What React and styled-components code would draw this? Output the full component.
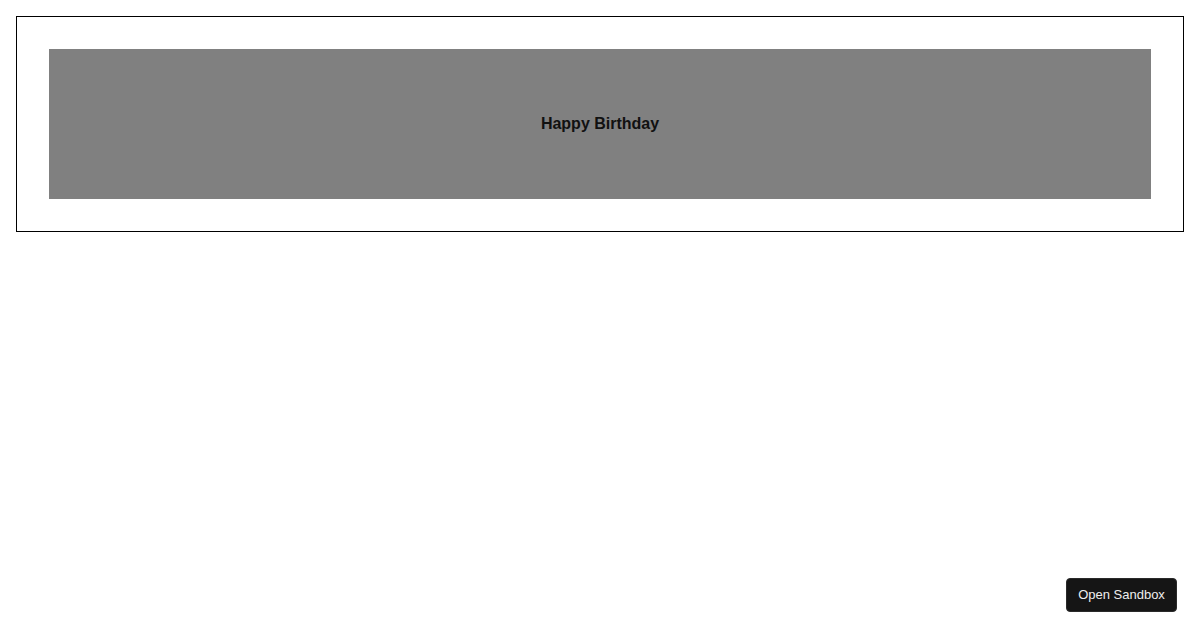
import React from "react";
import styled, { createGlobalStyle } from "styled-components";

const Global = createGlobalStyle`
  html, body { margin: 0; padding: 0; background: #fff; }
  body { padding: 16px; font-family: "Liberation Sans", Arial, sans-serif; }
`;

const Frame = styled.div`
  border: 1px solid #000;
  padding: 32px;
`;

const Banner = styled.div`
  height: 150px;
  background: #808080;
  display: flex;
  align-items: center;
  justify-content: center;
`;

const Title = styled.h1`
  margin: 0;
  font-family: "Liberation Sans", Arial, sans-serif;
  font-size: 16px;
  font-weight: 700;
  color: #111;
`;

const SandboxButton = styled.button`
  position: fixed;
  right: 23px;
  bottom: 18px;
  width: 111px;
  height: 34px;
  background: #151515;
  color: #eee;
  border: 1px solid #2a2a2a;
  border-radius: 4px;
  font-family: "Liberation Sans", Arial, sans-serif;
  font-size: 13px;
  padding: 0 0 2px;
  cursor: pointer;
`;

export default function App() {
  return (
    <>
      <Global />
      <Frame>
        <Banner>
          <Title>Happy Birthday</Title>
        </Banner>
      </Frame>
      <SandboxButton>Open Sandbox</SandboxButton>
    </>
  );
}
